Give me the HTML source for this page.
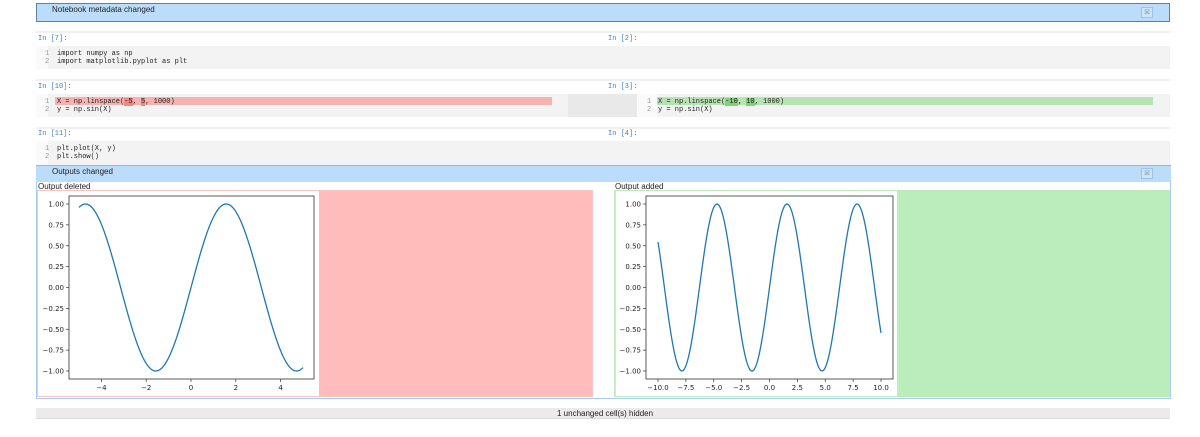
<!DOCTYPE html>
<html><head><meta charset="utf-8"><style>
*{margin:0;padding:0;box-sizing:border-box}
body{width:1200px;height:437px;background:#fff;position:relative;overflow:hidden;font-family:"Liberation Sans",sans-serif;font-size:8px;color:#222}
.a{position:absolute}
.mono{font-family:"Liberation Mono",monospace;font-size:7px;color:#222}
.lbl{font-family:"Liberation Mono",monospace;font-size:7px;color:#3b7fc4}
.ln{color:#999;font-family:"Liberation Mono",monospace;font-size:7px}
.close{width:12px;height:11px;border:1px solid #9cc3ec;background:#cfe4fb;color:#8aa;font-size:7px;text-align:center;line-height:9px}
</style></head><body>
<div class="a" style="left:36px;top:3px;width:1134px;height:19px;background:#bbdcfb;border:1px solid #5f7fa6"></div>
<div class="a" style="left:52px;top:5px;font-size:8px">Notebook metadata changed</div>
<div class="a close" style="left:1141px;top:7px">⊠</div>

<div class="a" style="left:36px;top:31px;width:1134px;height:2px;background:#f0f0f0"></div>
<div class="a lbl" style="left:38px;top:35px">In [7]:</div>
<div class="a lbl" style="left:608px;top:35px">In [2]:</div>
<div class="a" style="left:36px;top:46px;width:1134px;height:23px;background:#f3f3f3"></div>
<div class="a" style="left:36px;top:46px;width:12px;height:23px;background:#fafafa"></div>
<div class="a ln" style="left:45px;top:50px;line-height:8px">1<br>2</div>
<div class="a mono" style="left:57px;top:50px;line-height:8px">import numpy as np<br>import matplotlib.pyplot as plt</div>

<div class="a" style="left:36px;top:79px;width:1134px;height:2px;background:#f0f0f0"></div>
<div class="a lbl" style="left:38px;top:83px">In [10]:</div>
<div class="a lbl" style="left:608px;top:83px">In [3]:</div>
<div class="a" style="left:36px;top:94px;width:1134px;height:23px;background:#f3f3f3"></div>
<div class="a" style="left:36px;top:94px;width:12px;height:23px;background:#fafafa"></div>
<div class="a" style="left:568px;top:94px;width:69px;height:23px;background:#e9e9e9"></div>
<div class="a" style="left:637px;top:94px;width:20px;height:23px;background:#fafafa"></div>
<div class="a" style="left:55px;top:97px;width:497px;height:8px;background:#f5b2b0"></div>
<div class="a" style="left:657px;top:97px;width:496px;height:8px;background:#b7e3b3"></div>
<div class="a ln" style="left:45px;top:98px;line-height:8px">1<br>2</div>
<div class="a mono" style="left:57px;top:98px;line-height:8px">X = np.linspace(<span style="background:#ef8783">-5</span>, <span style="background:#ef8783">5</span>, 1000)<br>y = np.sin(X)</div>
<div class="a ln" style="left:647px;top:98px;line-height:8px">1<br>2</div>
<div class="a mono" style="left:658px;top:98px;line-height:8px">X = np.linspace(<span style="background:#85d07e">-10</span>, <span style="background:#85d07e">10</span>, 1000)<br>y = np.sin(X)</div>

<div class="a" style="left:36px;top:127px;width:1134px;height:2px;background:#f0f0f0"></div>
<div class="a lbl" style="left:38px;top:130px">In [11]:</div>
<div class="a lbl" style="left:608px;top:130px">In [4]:</div>
<div class="a" style="left:36px;top:141px;width:1134px;height:24px;background:#f3f3f3"></div>
<div class="a" style="left:36px;top:141px;width:12px;height:24px;background:#fafafa"></div>
<div class="a ln" style="left:45px;top:145px;line-height:8px">1<br>2</div>
<div class="a mono" style="left:57px;top:145px;line-height:8px">plt.plot(X, y)<br>plt.show()</div>

<div class="a" style="left:36px;top:165px;width:1135px;height:234px;border:1px solid #a9cdf2"></div>
<div class="a" style="left:36px;top:165px;width:1135px;height:17px;background:#bbdcfb;border-top:1px solid #8ab8e8"></div>
<div class="a" style="left:52px;top:167px;font-size:8px">Outputs changed</div>
<div class="a close" style="left:1141px;top:168px">⊠</div>
<div class="a" style="left:38px;top:182px;font-size:8px">Output deleted</div>
<div class="a" style="left:615px;top:182px;font-size:8px">Output added</div>
<div class="a" style="left:37px;top:190px;width:556px;height:207px;background:#fcc;border:1px solid #f8c4c4"></div>
<div class="a" style="left:319px;top:191px;width:273px;height:205px;background:#ffbcbb"></div>
<div class="a" style="left:38px;top:191px;width:281px;height:205px;background:#fff"></div>
<div class="a" style="left:614px;top:190px;width:556px;height:207px;background:#cdf0c9;border:1px solid #bfe8ba"></div>
<div class="a" style="left:897px;top:191px;width:273px;height:205px;background:#bbedbc"></div>
<div class="a" style="left:616px;top:191px;width:281px;height:205px;background:#fff"></div>
<svg class="a" style="left:0;top:0" width="1200" height="437" id="s"></svg>

<div class="a" style="left:36px;top:408px;width:1134px;height:11px;background:#ebebeb;border-bottom:1px solid #ddd"></div>
<div class="a" style="left:557px;top:409px;font-size:8px">1 unchanged cell(s) hidden</div>
<script>
var s=document.getElementById('s'),h='';
function plot(bx0,bx1,xa,xb,x0p,x1p,xt,fmt){
 var y1=204,ym1=371,top=196,bot=379;
 var Y=function(v){return (y1+ym1)/2-(v*(ym1-y1)/2)};
 var X=function(v){return x0p+(v-xa)*(x1p-x0p)/(xb-xa)};
 h+='<rect x="'+bx0+'" y="'+top+'" width="'+(bx1-bx0)+'" height="'+(bot-top)+'" fill="none" stroke="#333" stroke-width="0.8"/>';
 var d='';for(var i=0;i<=600;i++){var v=xa+(xb-xa)*i/600;d+=(i?'L':'M')+X(v).toFixed(2)+','+Y(Math.sin(v)).toFixed(2);}
 h+='<path d="'+d+'" fill="none" stroke="#1f77b4" stroke-width="1.3"/>';
 for(var k=0;k<9;k++){var v=1-k*0.25,yy=Y(v);
  h+='<line x1="'+(bx0-3)+'" x2="'+bx0+'" y1="'+yy+'" y2="'+yy+'" stroke="#333" stroke-width="0.7"/>';
  h+='<text x="'+(bx0-5)+'" y="'+(yy+2.5)+'" font-size="7" text-anchor="end" fill="#222" font-family="DejaVu Sans">'+(v<0?'\u2212':'')+Math.abs(v).toFixed(2)+'</text>';}
 xt.forEach(function(v){var xx=X(v);
  h+='<line x1="'+xx+'" x2="'+xx+'" y1="'+bot+'" y2="'+(bot+3)+'" stroke="#333" stroke-width="0.7"/>';
  h+='<text x="'+xx+'" y="'+(bot+11)+'" font-size="7" text-anchor="middle" fill="#222" font-family="DejaVu Sans">'+(v<0?'\u2212':'')+fmt(Math.abs(v))+'</text>';});
}
plot(69,314,-5,5,79,303,[-4,-2,0,2,4],function(v){return v});
plot(646,893,-10,10,658,881,[-10,-7.5,-5,-2.5,0,2.5,5,7.5,10],function(v){return v.toFixed(1)});
s.innerHTML=h;
</script>
</body></html>
